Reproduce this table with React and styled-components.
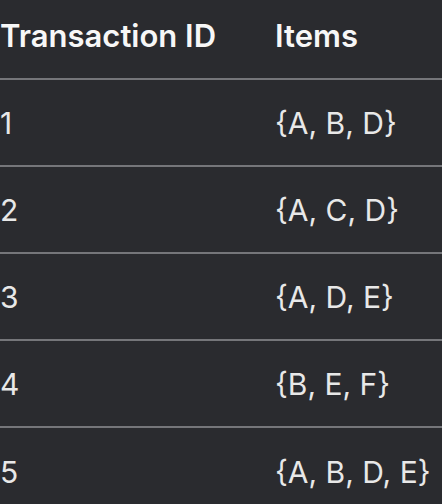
import React from "react";
import styled, { createGlobalStyle } from "styled-components";

const GlobalStyle = createGlobalStyle`
  html, body {
    margin: 0;
    padding: 0;
    background: #2a2b2f;
  }
  body {
    font-family: Inter, "Noto Sans", sans-serif;
    color: #ececec;
  }
`;

const Table = styled.div`
  width: 442px;
  display: flex;
  flex-direction: column;
`;

const Row = styled.div`
  display: grid;
  grid-template-columns: 275px 1fr;
  align-items: center;
  height: ${({ $header }) => ($header ? "80px" : "87px")};
  border-bottom: ${({ $last }) => ($last ? "none" : "2px solid #75767a")};
  padding-bottom: ${({ $header }) => ($header ? "8px" : "0")};
  box-sizing: border-box;
`;

const Cell = styled.div`
  font-size: ${({ $header }) => ($header ? "31px" : "30px")};
  font-weight: ${({ $header }) => ($header ? 600 : 400)};
  color: ${({ $header }) => ($header ? "#f7f7f7" : "#e8e8e8")};
  white-space: nowrap;
`;

const rows = [
  ["1", "{A, B, D}"],
  ["2", "{A, C, D}"],
  ["3", "{A, D, E}"],
  ["4", "{B, E, F}"],
  ["5", "{A, B, D, E}"],
];

export default function App() {
  return (
    <>
      <GlobalStyle />
      <Table>
        <Row $header>
          <Cell $header>Transaction ID</Cell>
          <Cell $header>Items</Cell>
        </Row>
        {rows.map(([id, items], i) => (
          <Row key={id} $last={i === rows.length - 1}>
            <Cell>{id}</Cell>
            <Cell>{items}</Cell>
          </Row>
        ))}
      </Table>
    </>
  );
}
